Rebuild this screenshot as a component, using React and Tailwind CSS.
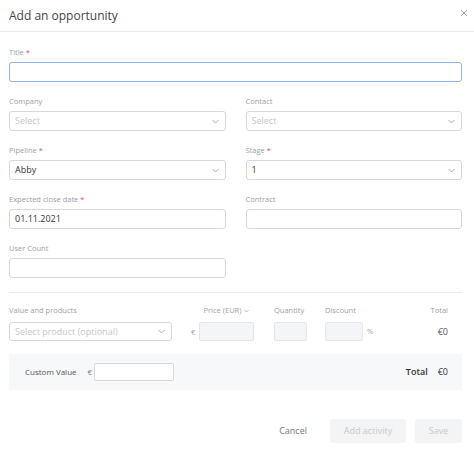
import React from "react";

function Chevron({ className = "" }) {
    return (
        <svg className={className} width="7" height="5" viewBox="0 0 7 5" fill="none">
            <path d="M0.5 1L3.5 4L6.5 1" stroke="#9ca3af" strokeWidth="0.9" />
        </svg>
    );
}

function Label({ children, required }) {
    return (
        <div className="h-[10px] leading-[10px] text-[7.5px] text-[#9a9fa5] mb-[5px]">
            {children}
            {required && <span className="text-[#e5534b]"> *</span>}
        </div>
    );
}

function Field({ label, required, children }) {
    return (
        <div>
            <Label required={required}>{label}</Label>
            {children}
        </div>
    );
}

function Input({ value = "", focus }) {
    return (
        <div
            className={`h-[20px] rounded-[3px] border bg-white px-[5px] flex items-center text-[9px] text-[#333] ${
                focus ? "border-[#8fb6e6]" : "border-[#d6d9dc]"
            }`}
        >
            {value}
        </div>
    );
}

function Select({ value, placeholder }) {
    return (
        <div className="h-[20px] rounded-[3px] border border-[#d6d9dc] bg-white pl-[5px] pr-[6px] flex items-center justify-between text-[9px]">
            <span className={value ? "text-[#333]" : "text-[#c3c7cb]"}>{value || placeholder}</span>
            <Chevron />
        </div>
    );
}

export default function App() {
    return (
        <div className="w-[474px] h-[450px] bg-white font-['Open_Sans',sans-serif] overflow-hidden">
            {/* --- Header --- */}
            <div className="h-[32px] border-b border-[#ebebeb] flex items-center justify-between pl-[9px] pr-[6px]">
                <h2 className="text-[12px] text-[#444]">Add an opportunity</h2>
                <svg width="8" height="8" viewBox="0 0 8 8" className="mb-[5px]">
                    <path d="M1 1L7 7M7 1L1 7" stroke="#a3a3a3" strokeWidth="1" />
                </svg>
            </div>

            <div className="px-[9px] pr-[12px] pt-[15px]">
                <Field label="Title" required>
                    <Input focus />
                </Field>

                {/* --- Two column fields --- */}
                <div className="grid grid-cols-2 gap-x-[20px] gap-y-[14px] mt-[14px]">
                    <Field label="Company">
                        <Select placeholder="Select" />
                    </Field>
                    <Field label="Contact">
                        <Select placeholder="Select" />
                    </Field>
                    <Field label="Pipeline" required>
                        <Select value="Abby" />
                    </Field>
                    <Field label="Stage" required>
                        <Select value="1" />
                    </Field>
                    <Field label="Expected close date" required>
                        <Input value="01.11.2021" />
                    </Field>
                    <Field label="Contract">
                        <Input />
                    </Field>
                    <Field label="User Count">
                        <Input />
                    </Field>
                </div>

                <div className="border-t border-[#ececec] mt-[14px]" />

                {/* --- Products --- */}
                <div className="flex items-center h-[10px] mt-[13px] text-[7.5px] text-[#9a9fa5]">
                    <div className="w-[163px]">Value and products</div>
                    <div className="ml-[19px] w-[8px]" />
                    <div className="w-[55px] flex items-center justify-center gap-[3px]">
                        Price (EUR)
                        <svg width="5" height="4" viewBox="0 0 5 4" fill="none">
                            <path d="M0.5 1L2.5 3L4.5 1" stroke="#9ca3af" strokeWidth="0.8" />
                        </svg>
                    </div>
                    <div className="ml-[20px] w-[33px]">Quantity</div>
                    <div className="ml-[18px] w-[38px]">Discount</div>
                    <div className="flex-1 text-right pr-[14px]">Total</div>
                </div>

                <div className="flex items-center mt-[6px] h-[19px]">
                    <div className="w-[163px] h-[19px] rounded-[3px] border border-[#d6d9dc] pl-[5px] pr-[6px] flex items-center justify-between text-[9px] text-[#c3c7cb]">
                        Select product (optional)
                        <Chevron />
                    </div>
                    <div className="ml-[19px] w-[8px] text-[8px] text-[#a0a5aa]">€</div>
                    <div className="w-[55px] h-[19px] rounded-[2px] border border-[#e3e5e8] bg-[#f4f5f7]" />
                    <div className="ml-[20px] w-[33px] h-[19px] rounded-[2px] border border-[#e3e5e8] bg-[#f4f5f7]" />
                    <div className="ml-[18px] w-[38px] h-[19px] rounded-[2px] border border-[#e3e5e8] bg-[#f4f5f7]" />
                    <div className="ml-[4px] text-[7.5px] text-[#a0a5aa]">%</div>
                    <div className="flex-1 text-right pr-[14px] text-[9px] text-[#555]">€0</div>
                </div>

                {/* --- Custom value --- */}
                <div className="mt-[13px] h-[36px] bg-[#f7f8f9] flex items-center pl-[16px] pr-[14px]">
                    <span className="text-[8px] text-[#555]">Custom Value</span>
                    <span className="ml-[11px] text-[8px] text-[#888]">€</span>
                    <div className="ml-[2px] w-[80px] h-[18px] bg-white border border-[#d6d9dc] rounded-[2px]" />
                    <div className="flex-1 text-right text-[9px] text-[#333]">
                        <span className="font-semibold">Total</span>
                        <span className="ml-[10px]">€0</span>
                    </div>
                </div>

                {/* --- Footer --- */}
                <div className="mt-[29px] flex items-center justify-end gap-[9px]">
                    <button className="h-[24px] px-[12px] text-[9px] text-[#777] mr-[2px]">Cancel</button>
                    <button className="h-[24px] w-[76px] rounded-[3px] bg-[#f3f4f6] text-[9px] text-[#c5c9cd]">Add activity</button>
                    <button className="h-[24px] w-[47px] rounded-[3px] bg-[#f3f4f6] text-[9px] text-[#c5c9cd]">Save</button>
                </div>
            </div>
        </div>
    );
}
